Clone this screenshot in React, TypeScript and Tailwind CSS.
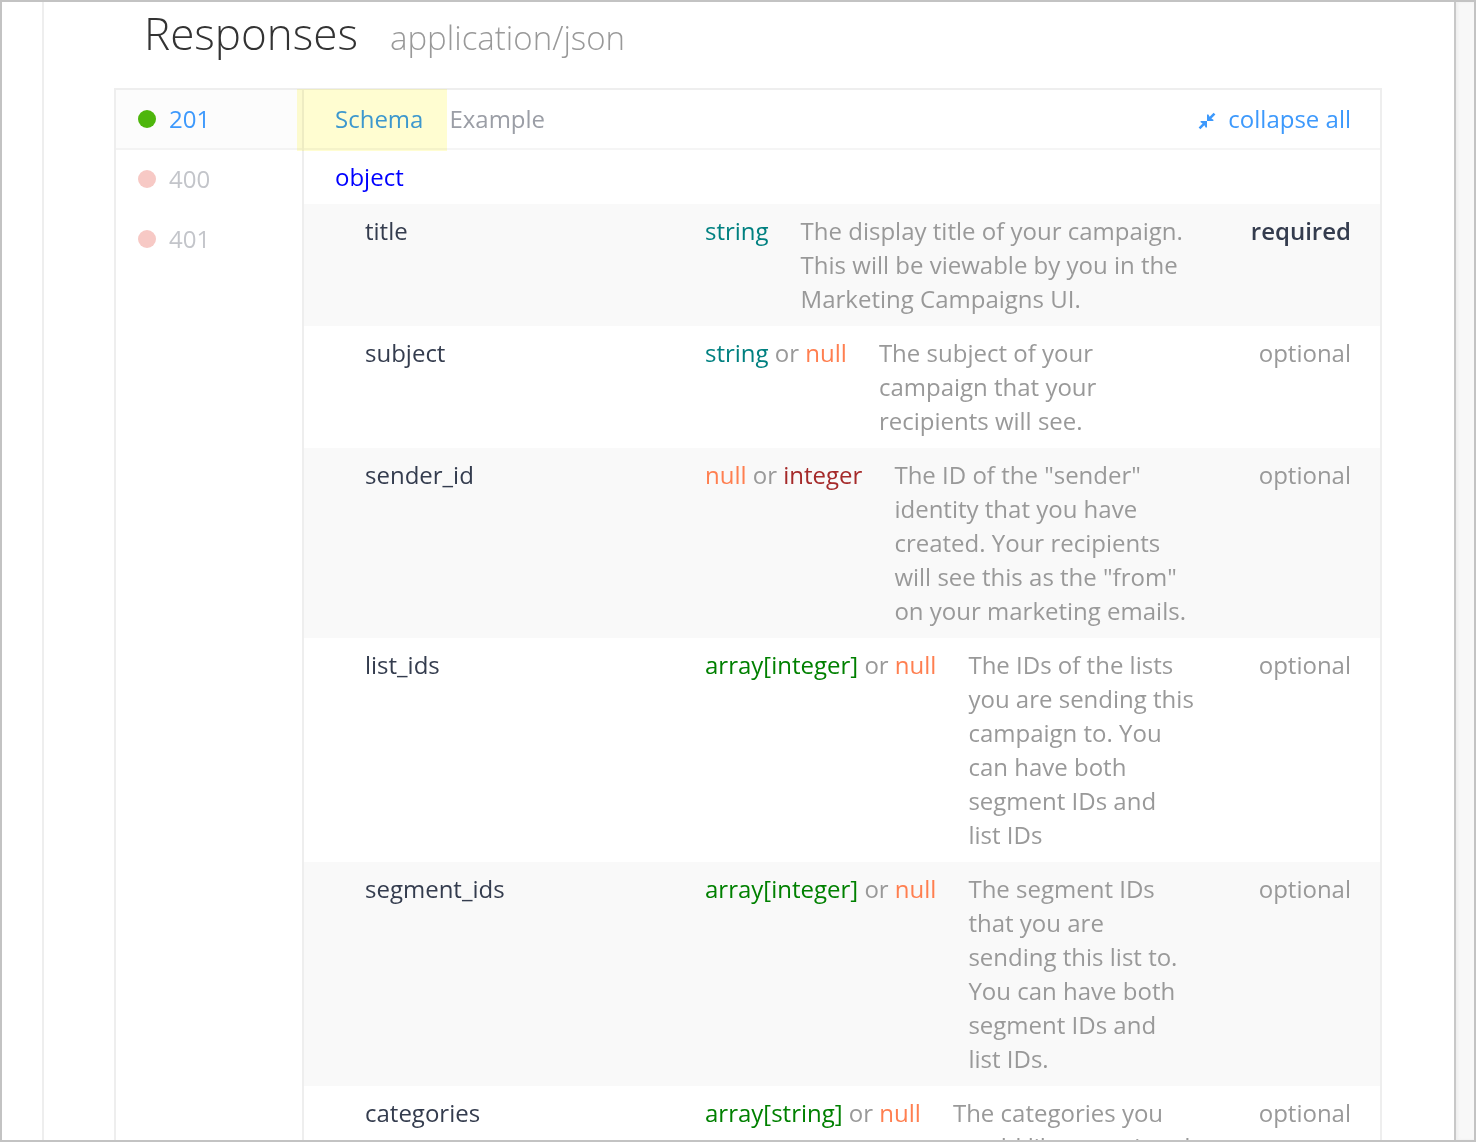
import clsx from "clsx";

type TypePart = { name: string; color: string };

type Field = {
  name: string;
  types: TypePart[];
  description: string;
  required?: boolean;
};

const STRING = { name: "string", color: "text-[#008080]" };
const NULL = { name: "null", color: "text-[#ff7f50]" };
const INTEGER = { name: "integer", color: "text-[#a52a2a]" };
const INTEGER_ARRAY = { name: "array[integer]", color: "text-[#008000]" };
const STRING_ARRAY = { name: "array[string]", color: "text-[#008000]" };

const fields: Field[] = [
  {
    name: "title",
    types: [STRING],
    description:
      "The display title of your campaign. This will be viewable by you in the Marketing Campaigns UI.",
    required: true,
  },
  {
    name: "subject",
    types: [STRING, NULL],
    description: "The subject of your campaign that your recipients will see.",
  },
  {
    name: "sender_id",
    types: [NULL, INTEGER],
    description:
      'The ID of the "sender" identity that you have created. Your recipients will see this as the "from" on your marketing emails.',
  },
  {
    name: "list_ids",
    types: [INTEGER_ARRAY, NULL],
    description:
      "The IDs of the lists you are sending this campaign to. You can have both segment IDs and list\u00a0IDs",
  },
  {
    name: "segment_ids",
    types: [INTEGER_ARRAY, NULL],
    description:
      "The segment IDs that you are sending this list to. You can have both segment IDs and list\u00a0IDs.",
  },
  {
    name: "categories",
    types: [STRING_ARRAY, NULL],
    description: "The categories you would like associated",
  },
];

const codes = [
  { code: "201", ok: true },
  { code: "400", ok: false },
  { code: "401", ok: false },
];

export default function App() {
  return (
    <div className="flex h-screen overflow-hidden border-2 border-[#c3c3c3] bg-white font-['Open_Sans',sans-serif] text-2xl leading-[34px]">
      <main className="ml-10 min-w-0 flex-1 border-l-2 border-[#eeeeee] pr-[72px] pl-[70px]">
        <header className="flex h-[86px] items-baseline gap-8 pl-[30px]">
          <h1 className="text-[44px] leading-[62px] font-light text-[#333333]">Responses</h1>
          <span className="text-[33px] font-light text-[#999999]">application/json</span>
        </header>

        <section className="flex border-2 border-[#eeeeee]">
          <StatusCodes />
          <div className="min-w-0 flex-1">
            <Toolbar />
            <p className="px-[31px] py-[10px] text-[#0000ff]">object</p>
            <SchemaTable />
          </div>
        </section>
      </main>
      <aside className="w-5 border-l-2 border-[#c8c8c8] bg-[#f8f8f8] shadow-[inset_2px_0_3px_#eeeeee]" />
    </div>
  );
}

function StatusCodes() {
  return (
    <nav className="w-[188px] shrink-0 border-r-2 border-[#eeeeee]">
      {codes.map(({ code, ok }) => (
        <button
          key={code}
          type="button"
          className={clsx(
            "flex h-[60px] w-full items-center gap-[13px] border-b-2 pl-[22px]",
            ok
              ? "border-[#f3f3f3] bg-[#fcfcfc] text-[#3d99fc]"
              : "border-transparent text-[#c3c5ca]",
          )}
        >
          <span className={clsx("size-[18px] rounded-full", ok ? "bg-[#4eb60c]" : "bg-[#f7c9c5]")} />
          {code}
        </button>
      ))}
    </nav>
  );
}

function Toolbar() {
  return (
    <div className="flex h-[60px] items-center border-b-2 border-[#f5f5f5] pr-[29px] pl-[31px]">
      <button type="button" className="relative text-[#3d99fc]">
        Schema
        <span className="pointer-events-none absolute -top-[13px] -right-[24px] -left-[38px] h-[62px] bg-[#fffdd1] mix-blend-multiply" />
      </button>
      <button type="button" className="ml-[26px] text-[#9b9ea6]">
        Example
      </button>
      <button type="button" className="ml-auto flex items-center gap-3 text-[#3d99fc]">
        <CollapseIcon />
        collapse all
      </button>
    </div>
  );
}

function SchemaTable() {
  return (
    <table className="w-full table-fixed text-left">
      <colgroup>
        <col className="w-[401px]" />
        <col />
        <col className="w-[184px]" />
      </colgroup>
      <tbody>
        {fields.map((field) => (
          <tr key={field.name} className="align-top odd:bg-[#f9f9f9]">
            <th scope="row" className="py-[10px] pl-[61px] font-normal text-[#343c4e]">
              {field.name}
            </th>
            <td className="py-[10px]">
              <div className="flex gap-8">
                <span className="shrink-0 text-[#999999]">
                  {field.types.map((type, i) => (
                    <span key={type.name}>
                      {i > 0 && " or "}
                      <span className={type.color}>{type.name}</span>
                    </span>
                  ))}
                </span>
                <span className="text-[#999999]">{field.description}</span>
              </div>
            </td>
            <td
              className={clsx(
                "py-[10px] pr-[29px] text-right",
                field.required ? "font-semibold text-[#343c4e]" : "text-[#999999]",
              )}
            >
              {field.required ? "required" : "optional"}
            </td>
          </tr>
        ))}
      </tbody>
    </table>
  );
}

function CollapseIcon() {
  return (
    <svg className="mt-[3px] h-[18px] w-[18px]" viewBox="0 0 18 18" fill="#3d99fc" aria-hidden="true">
      <path d="M9 2.6V9h6.4V7.7l-2-1.2 4-4L15.6.7l-4 4-1.2-2.1z" />
      <path d="M9 15.4V9H2.6v1.3l2 1.2-4 4 1.8 1.8 4-4 1.2 2.1z" />
    </svg>
  );
}
